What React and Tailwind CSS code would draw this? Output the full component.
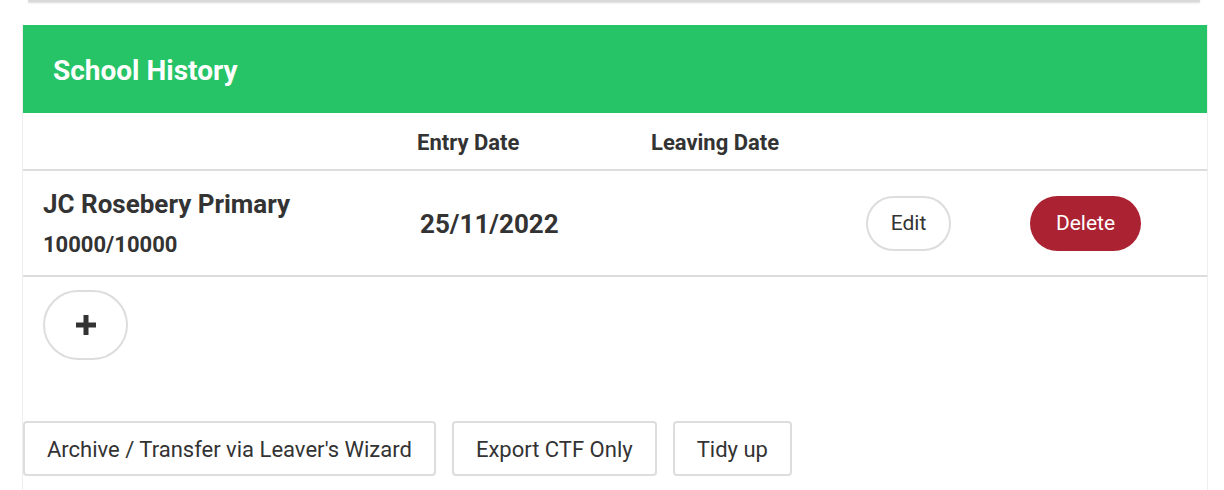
export default function App() {
  return (
    <div className="w-[1224px] h-[490px] bg-white overflow-hidden relative" style={{ fontFamily: "Roboto, 'Liberation Sans', sans-serif" }}>
      <div className="mx-[28px] mr-[24px] h-[2px] bg-[#d9d9d9] shadow-[0_1px_2px_rgba(0,0,0,0.15)]" />
      <div className="ml-[22px] mt-[23px] w-[1186px] border-x border-[#eeeeee] h-[470px]">
        <div className="bg-[#26c466] h-[88px] flex items-center pl-[30px] pt-[3px]">
          <h2 className="text-white font-bold text-[28px] leading-none">School History</h2>
        </div>
        <div className="h-[58px] border-b-2 border-[#dddddd] flex items-center pt-[2px] text-[#333333] font-bold text-[22px]">
          <div className="ml-[394px] w-[234px]">Entry Date</div>
          <div>Leaving Date</div>
        </div>
        <div className="h-[106px] border-b-2 border-[#dddddd] flex items-center text-[#333333]">
          <div className="ml-[20px] w-[377px] flex flex-col">
            <span className="font-bold text-[26px] leading-none">JC Rosebery Primary</span>
            <span className="font-bold text-[22px] leading-none mt-[17px]">10000/10000</span>
          </div>
          <div className="font-bold text-[26px] leading-none mt-[1px] w-[446px]">25/11/2022</div>
          <button className="w-[85px] h-[55px] pt-[2px] rounded-full border-2 border-[#dddddd] bg-white text-[21px] text-[#333333] flex items-center justify-center">Edit</button>
          <button className="ml-[79px] w-[111px] h-[55px] pt-[2px] rounded-full bg-[#ab2333] text-white text-[21px] flex items-center justify-center">Delete</button>
        </div>
        <div className="pl-[20px] pt-[13px]">
          <button className="w-[85px] h-[70px] rounded-full border-2 border-[#dddddd] bg-white flex items-center justify-center">
            <svg width="22" height="22" viewBox="0 0 22 22"><path d="M8.5 1h5v7.5H21v5h-7.5V21h-5v-7.5H1v-5h7.5z" fill="#333333" /></svg>
          </button>
        </div>
        <div className="flex gap-[16px] mt-[61px] text-[22px] text-[#333333]">
          <button className="h-[55px] px-[22px] pt-[2px] border-2 border-[#dddddd] rounded-[4px] bg-white">Archive / Transfer via Leaver's Wizard</button>
          <button className="h-[55px] px-[22px] pt-[2px] border-2 border-[#dddddd] rounded-[4px] bg-white">Export CTF Only</button>
          <button className="h-[55px] px-[22px] pt-[2px] border-2 border-[#dddddd] rounded-[4px] bg-white">Tidy up</button>
        </div>
      </div>
    </div>
  );
}
